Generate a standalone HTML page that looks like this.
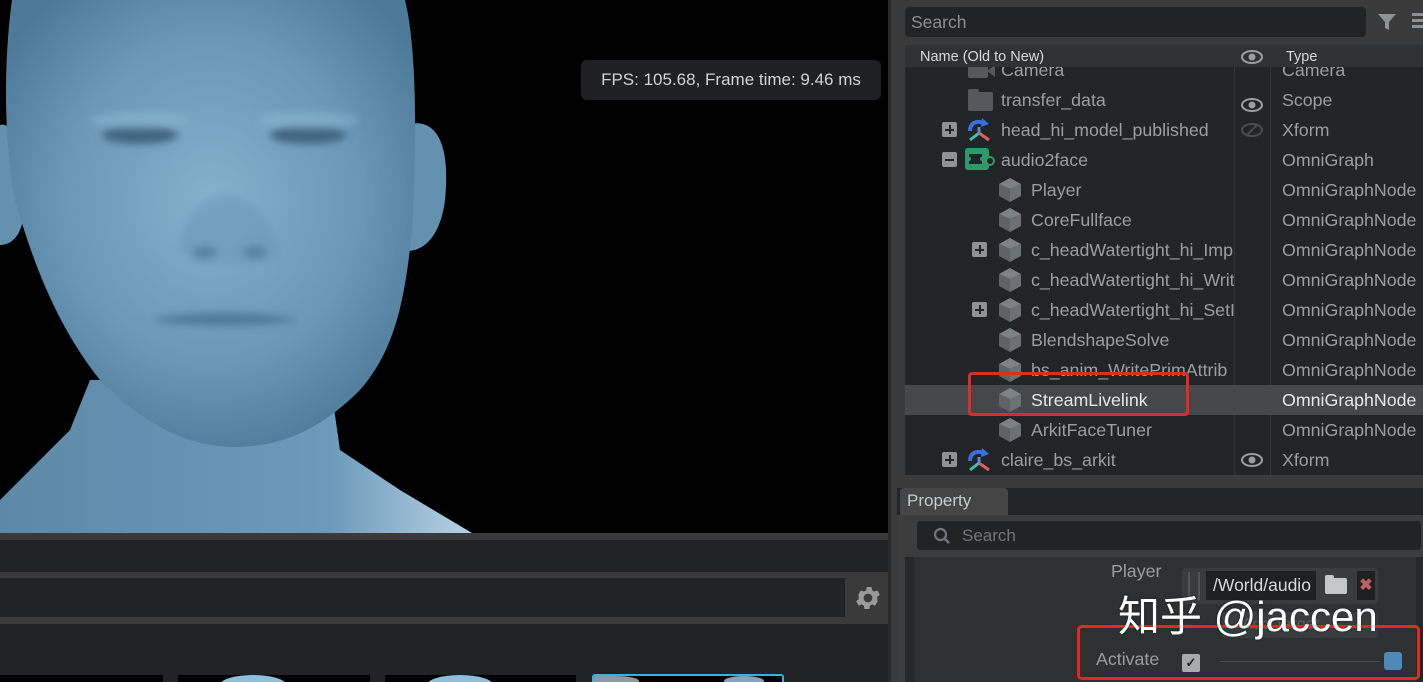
<!DOCTYPE html>
<html><head><meta charset="utf-8"><style>
*{margin:0;padding:0;box-sizing:border-box}
body{width:1423px;height:682px;overflow:hidden;background:#3a3a3a;font-family:"Liberation Sans",sans-serif;position:relative}
.a{position:absolute}
.t{position:absolute;font-size:17.8px;color:#9a9ea2;white-space:nowrap;line-height:30px}
.cube{position:absolute;width:24px;height:26px}
.pm{position:absolute;width:15px;height:15px;background:#8e9296;border-radius:2px}
.pm:before{content:"";position:absolute;left:3px;top:6.5px;width:9px;height:2px;background:#232427}
.pm.p:after{content:"";position:absolute;left:6.5px;top:3px;width:2px;height:9px;background:#232427}
</style></head><body>
<div class="a" style="left:0;top:0;width:888px;height:533px;background:#000;overflow:hidden">
<svg width="888" height="533" viewBox="0 0 888 533">
<defs>
<radialGradient id="g" cx="0.5" cy="0.45" r="0.6"><stop offset="0" stop-color="#86b1cc"/><stop offset="0.6" stop-color="#6b98b7"/><stop offset="1" stop-color="#4d7a99"/></radialGradient>
<linearGradient id="n" x1="0" y1="0" x2="1" y2="0"><stop offset="0" stop-color="#5c89a8"/><stop offset="0.7" stop-color="#6d9abb"/><stop offset="1" stop-color="#b7d2e2"/></linearGradient>
<filter id="b"><feGaussianBlur stdDeviation="4"/></filter>
</defs>
<path d="M0,500 L70,430 L90,380 L330,380 L340,450 L400,490 L472,533 L0,533Z" fill="url(#n)"/>
<path d="M405,125 C440,115 450,150 445,200 C440,240 420,255 400,250Z" fill="#6591b0"/>
<path d="M0,125 C15,120 25,160 25,200 C25,230 15,245 0,245Z" fill="#6591b0"/>
<path d="M12,0 L405,0 C415,40 418,120 412,230 C405,300 395,350 360,390 C320,430 280,448 230,447 C180,445 140,420 100,380 C60,330 35,270 15,200 C2,130 5,50 12,0Z" fill="url(#g)"/>
<g filter="url(#b)">
<ellipse cx="140" cy="135" rx="38" ry="9" fill="#3f6580"/>
<ellipse cx="308" cy="135" rx="38" ry="9" fill="#3f6580"/>
<ellipse cx="205" cy="252" rx="12" ry="6" fill="#3a5e78"/>
<ellipse cx="255" cy="252" rx="12" ry="6" fill="#3a5e78"/>
<path d="M150,320 C190,310 260,310 300,320 C260,328 190,328 150,320Z" fill="#507b98"/>
<ellipse cx="140" cy="120" rx="50" ry="8" fill="#8cb6cf" opacity=".6"/>
<ellipse cx="308" cy="120" rx="50" ry="8" fill="#8cb6cf" opacity=".6"/>
</g>
<path d="M180,250 C180,220 200,195 225,195 C250,195 275,220 280,255 C270,268 190,268 180,250Z" fill="#6d9aba" opacity=".6" filter="url(#b)"/>
</svg>
</div>
<div class="a" style="left:581px;top:60px;width:300px;height:40px;background:#1f2022;border-radius:6px;color:#d0d2d4;font-size:17px;line-height:40px;text-align:center">FPS: 105.68, Frame time: 9.46 ms</div>
<div class="a" style="left:0;top:540px;width:888px;height:32px;background:#222325"></div>
<div class="a" style="left:0;top:578px;width:845px;height:39px;background:#222325"></div>
<svg class="a" style="left:853px;top:583px" width="30" height="30" viewBox="0 0 24 24"><path fill="#9a9a9a" d="M19.4 13a7.5 7.5 0 000-2l2.1-1.6-2-3.5-2.5 1a7.4 7.4 0 00-1.7-1l-.4-2.7h-4l-.4 2.7a7.4 7.4 0 00-1.7 1l-2.5-1-2 3.5L4.6 11a7.5 7.5 0 000 2l-2.1 1.6 2 3.5 2.5-1a7.4 7.4 0 001.7 1l.4 2.7h4l.4-2.7a7.4 7.4 0 001.7-1l2.5 1 2-3.5zM12 15.5a3.5 3.5 0 110-7 3.5 3.5 0 010 7z"/></svg>
<div class="a" style="left:0;top:624px;width:888px;height:58px;background:#222325"></div>
<div class="a" style="left:0;top:675px;width:163px;height:7px;background:#000"></div>
<div class="a" style="left:178px;top:675px;width:192px;height:7px;background:#000;overflow:hidden"><div class="a" style="left:42px;top:0;width:66px;height:20px;background:#8fbfdc;border-radius:50%"></div></div>
<div class="a" style="left:385px;top:675px;width:191px;height:7px;background:#000;overflow:hidden"><div class="a" style="left:42px;top:0;width:66px;height:20px;background:#8fbfdc;border-radius:50%"></div></div>
<div class="a" style="left:592px;top:674px;width:192px;height:8px;background:#000;border:2px solid #3bb0e0;border-bottom:none;border-radius:3px 3px 0 0;overflow:hidden"><div class="a" style="left:0;top:0;width:45px;height:10px;background:#8a9aa6;border-radius:0 50% 0 0"></div><div class="a" style="left:130px;top:0;width:40px;height:10px;background:#7fa6c0;border-radius:50%"></div></div>
<div class="a" style="left:888px;top:0;width:3px;height:682px;background:#2a2a2a"></div>
<div class="a" style="left:905px;top:7px;width:461px;height:30px;background:#222325;border-radius:4px;color:#8a8d90;font-size:17.5px;line-height:30px;padding-left:6px">Search</div>
<svg class="a" style="left:1377px;top:12px" width="20" height="20" viewBox="0 0 20 20"><path d="M1 2h18l-7 8v8l-4-2v-6z" fill="#8e9296"/></svg>
<div class="a" style="left:1412px;top:13px;width:11px;height:3px;background:#8e9296;box-shadow:0 6px 0 #8e9296,0 12px 0 #8e9296"></div>
<div class="a" style="left:905px;top:45px;width:518px;height:430px;background:#232427;overflow:hidden">
<div class="a" style="left:329px;top:0;width:1px;height:430px;background:#34363a"></div>
<div class="a" style="left:365px;top:0;width:1px;height:430px;background:#34363a"></div>
<div class="a" style="left:0;top:340px;width:518px;height:30px;background:#45484b"></div>
</div>
<div class="a" style="left:905px;top:45px;width:518px;height:22px;background:#303134;font-size:14.5px;color:#d6d8da;line-height:25px">
<span class="a" style="left:15px">Name (Old to New)</span><span class="a" style="left:381px">Type</span>
<svg class="a" style="left:336px;top:5px" width="22" height="14" viewBox="0 0 22 14"><ellipse cx="11" cy="7" rx="10" ry="6" fill="none" stroke="#9a9ea2" stroke-width="2"/><circle cx="11" cy="7" r="3.5" fill="#9a9ea2"/></svg>
</div>
<div class="a" style="left:905px;top:67px;width:518px;height:408px;overflow:hidden">
<div style="position:absolute;left:0;top:-12px;width:518px">
<div class="a" style="left:63px;top:9px;width:20px;height:14px;background:#55595d;border-radius:2px"></div>
<div class="a" style="left:82px;top:10px;width:0;height:0;border-right:8px solid #55595d;border-top:6px solid transparent;border-bottom:6px solid transparent"></div>
<div class="t" style="left:96px;top:0">Camera</div><div class="t" style="left:377px;top:0">Camera</div>
<div class="a" style="left:63px;top:34px;width:11px;height:5px;background:#55595d;border-radius:2px 2px 0 0"></div>
<div class="a" style="left:63px;top:37px;width:25px;height:19px;background:#55595d;border-radius:2px"></div>
<div class="t" style="left:96px;top:30px">transfer_data</div><div class="t" style="left:377px;top:30px">Scope</div>
<div class="pm p" style="left:37px;top:67px"></div>
<svg class="a" style="left:61px;top:62px" width="26" height="26" viewBox="0 0 26 26"><path d="M4 14 C4 6 10 3 18 6" stroke="#3a6fe0" stroke-width="4" fill="none"/><path d="M16 1 L23 7 L15 10Z" fill="#3a6fe0"/><path d="M13 16 L4 23" stroke="#3cc0b0" stroke-width="3"/><path d="M13 16 L23 23" stroke="#e06060" stroke-width="3"/><path d="M13 16 L13 10" stroke="#5a8ad0" stroke-width="3"/></svg>
<div class="t" style="left:96px;top:60px">head_hi_model_published</div><div class="t" style="left:377px;top:60px">Xform</div>
<div class="pm" style="left:37px;top:97px"></div>
<svg class="a" style="left:59px;top:91px" width="32" height="26" viewBox="0 0 32 26"><rect x="1" y="2" width="24" height="22" rx="3" fill="#2e9a6a"/><path d="M5 8h13v3a2 2 0 000 4v3H5v-3a2 2 0 000-4z" fill="#232427"/><circle cx="26" cy="15" r="4" fill="#232427" stroke="#2e9a6a" stroke-width="2"/></svg>
<div class="t" style="left:96px;top:90px">audio2face</div><div class="t" style="left:377px;top:90px">OmniGraph</div>
</div>
</div>
<div id="rows"></div>
<div class="a" style="left:897px;top:475px;width:526px;height:13px;background:#3a3a3a"></div>
<div class="a" style="left:897px;top:488px;width:526px;height:27px;background:#232427"></div>
<div class="a" style="left:900px;top:488px;width:108px;height:28px;background:#454545;border-radius:4px 4px 0 0;color:#c8cacc;font-size:17px;line-height:26px;padding-left:7px">Property</div>
<div class="a" style="left:897px;top:515px;width:526px;height:167px;background:#3c3c3c"></div>
<div class="a" style="left:917px;top:521px;width:504px;height:29px;background:#222325;border-radius:3px;color:#70757a;font-size:17px;line-height:29px;padding-left:45px">Search</div>
<svg class="a" style="left:933px;top:527px" width="18" height="18" viewBox="0 0 18 18"><circle cx="7.5" cy="7.5" r="5.5" fill="none" stroke="#70757a" stroke-width="2.2"/><path d="M11.5 11.5L16 16" stroke="#70757a" stroke-width="2.5"/></svg>
<div class="a" style="left:905px;top:557px;width:511px;height:125px;background:#2f3031"></div>
<div class="a" style="left:905px;top:557px;width:9px;height:125px;background:#262729"></div>
<div class="a" style="left:1416px;top:557px;width:7px;height:125px;background:#262729"></div>
<div class="t" style="left:1111px;top:556px;color:#9a9ea2">Player</div>
<div class="a" style="left:1182px;top:568px;width:196px;height:36px;background:#3a3b3d;border-radius:3px"></div>
<div class="a" style="left:1188px;top:572px;width:12px;height:28px;border-left:2px solid #555;border-right:2px solid #555"></div>
<div class="a" style="left:1206px;top:571px;width:110px;height:29px;background:#1f2022;color:#d6d8da;font-size:17.5px;line-height:29px;padding-left:7px;overflow:hidden;white-space:nowrap">/World/audio</div>
<div class="a" style="left:1325px;top:575px;width:9px;height:4px;background:#c4c6c9;border-radius:2px 2px 0 0"></div>
<div class="a" style="left:1325px;top:578px;width:22px;height:16px;background:#c4c6c9;border-radius:2px"></div>
<div class="a" style="left:1357px;top:571px;width:18px;height:29px;background:#1f2022;color:#c06060;font-size:16px;line-height:29px;text-align:center;font-weight:bold">✖</div>
<div class="a" style="left:1222px;top:612px;width:156px;height:26px;background:#3a3b3d;border-radius:3px;color:#5a5d60;font-size:16px;line-height:26px;padding-left:20px">Add Target</div>
<div class="a" style="left:1077px;top:625px;width:343px;height:55px;border:3px solid #e02a25;border-radius:5px"></div>
<div class="t" style="left:1096px;top:644px;color:#9a9ea2">Activate</div>
<div class="a" style="left:1182px;top:654px;width:18px;height:18px;background:#a8aaad;border-radius:2px;color:#222;font-size:13px;line-height:18px;text-align:center;font-weight:bold">✓</div>
<div class="a" style="left:1220px;top:661px;width:160px;height:1px;background:#4a4b4d"></div>
<div class="a" style="left:1384px;top:652px;width:18px;height:18px;background:#4e8ab8;border-radius:3px"></div>
<div class="a" style="left:1118px;top:591px;color:#fff;font-size:42px;line-height:52px;font-family:'Liberation Sans','Noto Sans CJK SC',sans-serif;white-space:nowrap;text-shadow:0 0 2px rgba(0,0,0,.5)">知乎 @jaccen</div>
<script>
var rows=[["Player",0],["CoreFullface",0],["c_headWatertight_hi_Imp",1],["c_headWatertight_hi_Writ",0],["c_headWatertight_hi_SetI",1],["BlendshapeSolve",0],["bs_anim_WritePrimAttrib",0],["StreamLivelink",0],["ArkitFaceTuner",0]];
var h="";
rows.forEach(function(r,i){var y=175+i*30;var sel=r[0]=="StreamLivelink";var c=sel?"#e4e6e8":"#9a9ea2";
if(r[1])h+='<div class="pm p" style="left:972px;top:'+(y+7)+'px"></div>';
h+='<svg class="cube" style="left:998px;top:'+(y+2)+'px" viewBox="0 0 24 26"><path d="M12 1L23 7L12 12L1 7Z" fill="#7d8286"/><path d="M1 7L12 12L12 25L1 19Z" fill="#5e6367"/><path d="M23 7L12 12L12 25L23 19Z" fill="#6c7175"/></svg>';
h+='<div class="t" style="left:1031px;top:'+y+'px;color:'+c+';width:203px;overflow:hidden">'+r[0]+'</div>';
h+='<div class="t" style="left:1282px;top:'+y+'px;color:'+c+'">OmniGraphNode</div>';});
var y=445;
h+='<div class="pm p" style="left:942px;top:'+(y+7)+'px"></div>';
h+='<svg class="a" style="left:966px;top:'+(y+2)+'px" width="26" height="26" viewBox="0 0 26 26"><path d="M4 14 C4 6 10 3 18 6" stroke="#3a6fe0" stroke-width="4" fill="none"/><path d="M16 1 L23 7 L15 10Z" fill="#3a6fe0"/><path d="M13 16 L4 23" stroke="#3cc0b0" stroke-width="3"/><path d="M13 16 L23 23" stroke="#e06060" stroke-width="3"/><path d="M13 16 L13 10" stroke="#5a8ad0" stroke-width="3"/></svg>';
h+='<div class="t" style="left:1001px;top:'+y+'px">claire_bs_arkit</div><div class="t" style="left:1282px;top:'+y+'px">Xform</div>';
[90,445].forEach(function(yy){h+='<svg class="a" style="left:1241px;top:'+(yy+8)+'px" width="22" height="14" viewBox="0 0 22 14"><ellipse cx="11" cy="7" rx="10" ry="6" fill="none" stroke="#9a9ea2" stroke-width="2"/><circle cx="11" cy="7" r="3.5" fill="#9a9ea2"/></svg>';});
h+='<svg class="a" style="left:1241px;top:123px" width="22" height="14" viewBox="0 0 22 14"><ellipse cx="11" cy="7" rx="10" ry="6" fill="none" stroke="#4a4d50" stroke-width="2"/><path d="M5 13L17 1" stroke="#4a4d50" stroke-width="2"/></svg>';
h+='<div class="a" style="left:968px;top:372px;width:221px;height:44px;border:3px solid #e02a25;border-radius:4px"></div>';
document.getElementById("rows").innerHTML=h;
</script>
</body></html>
